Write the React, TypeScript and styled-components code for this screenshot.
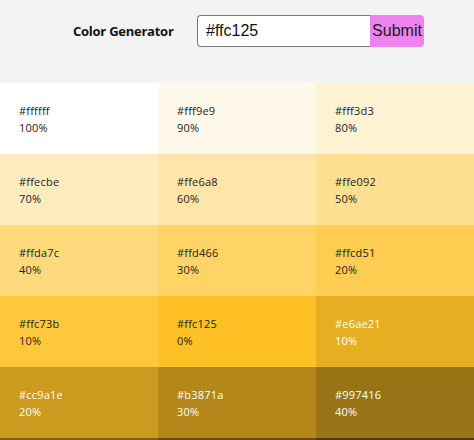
import { useState } from "react";
import styled, { createGlobalStyle } from "styled-components";

const GlobalStyle = createGlobalStyle`
  * {
    box-sizing: border-box;
  }
  body {
    margin: 0;
    font-family: "Open Sans", "Liberation Sans", sans-serif;
    background: #fff;
  }
`;

type Swatch = { hex: string; weight: number; dark: boolean };

const toHex = (n: number) => Math.round(n).toString(16).padStart(2, "0");

const buildSwatches = (base: string): Swatch[] => {
  const r = parseInt(base.slice(1, 3), 16);
  const g = parseInt(base.slice(3, 5), 16);
  const b = parseInt(base.slice(5, 7), 16);
  const list: Swatch[] = [];
  // tints from white down to the base colour
  for (let w = 100; w >= 10; w -= 10) {
    const p = w / 100;
    const hex = `#${toHex(r + (255 - r) * p)}${toHex(g + (255 - g) * p)}${toHex(b + (255 - b) * p)}`;
    list.push({ hex, weight: w, dark: false });
  }
  list.push({ hex: base, weight: 0, dark: false });
  for (let w = 10; w <= 100; w += 10) {
    const p = 1 - w / 100;
    const hex = `#${toHex(r * p)}${toHex(g * p)}${toHex(b * p)}`;
    list.push({ hex, weight: w, dark: true });
  }
  return list;
};

const App = () => {
  const [color, setColor] = useState<string>("#ffc125");
  const [swatches, setSwatches] = useState<Swatch[]>(buildSwatches("#ffc125"));

  const onSubmit = (event: React.FormEvent<HTMLFormElement>) => {
    event.preventDefault();
    if (/^#[0-9a-fA-F]{6}$/.test(color)) {
      setSwatches(buildSwatches(color.toLowerCase()));
    }
  };

  return (
    <>
      <GlobalStyle />
      <Header>
        <Title>Color Generator</Title>
        <Form onSubmit={onSubmit}>
          <ColorInput
            type="text"
            value={color}
            onChange={(e) => setColor(e.target.value)}
          />
          <SubmitButton type="submit">Submit</SubmitButton>
        </Form>
      </Header>
      <Grid>
        {swatches.map((s) => (
          <Cell key={`${s.hex}-${s.weight}-${s.dark}`} bg={s.hex} light={s.dark}>
            <CellText>{s.hex}</CellText>
            <CellText>{s.weight}%</CellText>
          </Cell>
        ))}
      </Grid>
    </>
  );
};

export default App;

const Header = styled.header`
  height: 83px;
  background: #f3f3f3;
  display: flex;
  align-items: flex-start;
  padding: 15px 0 0 73px;
  gap: 24px;
`;

const Title = styled.h3`
  margin: 0;
  width: 100px;
  height: 32px;
  display: flex;
  align-items: center;
  white-space: nowrap;
  font-size: 13px;
  font-weight: 700;
  color: #111;
  letter-spacing: -0.25px;
`;

const Form = styled.form`
  display: flex;
  height: 32px;
`;

const ColorInput = styled.input`
  width: 173px;
  height: 32px;
  border: 1px solid #7a7a7a;
  border-right: none;
  border-radius: 4px 0 0 4px;
  padding: 0 8px;
  font-family: "Liberation Sans", Arial, sans-serif;
  font-size: 16px;
  color: #111;
  background: #fff;
  outline: none;
`;

const SubmitButton = styled.button`
  width: 54px;
  height: 32px;
  border: none;
  border-radius: 0 4px 4px 0;
  background: #ee82ee;
  font-family: "Liberation Sans", Arial, sans-serif;
  font-size: 16px;
  color: #1a1a1a;
  padding: 0;
  cursor: pointer;
`;

const Grid = styled.section`
  display: grid;
  grid-template-columns: repeat(3, 1fr);
  grid-auto-rows: 71px;
`;

const Cell = styled.article<{ bg: string; light: boolean }>`
  background: ${({ bg }) => bg};
  color: ${({ light }) => (light ? "#fff" : "#222")};
  display: flex;
  flex-direction: column;
  justify-content: center;
  padding: 0 19px;
`;

const CellText = styled.p`
  margin: 0;
  font-size: 11px;
  line-height: 17px;
  letter-spacing: 0.2px;
`;
